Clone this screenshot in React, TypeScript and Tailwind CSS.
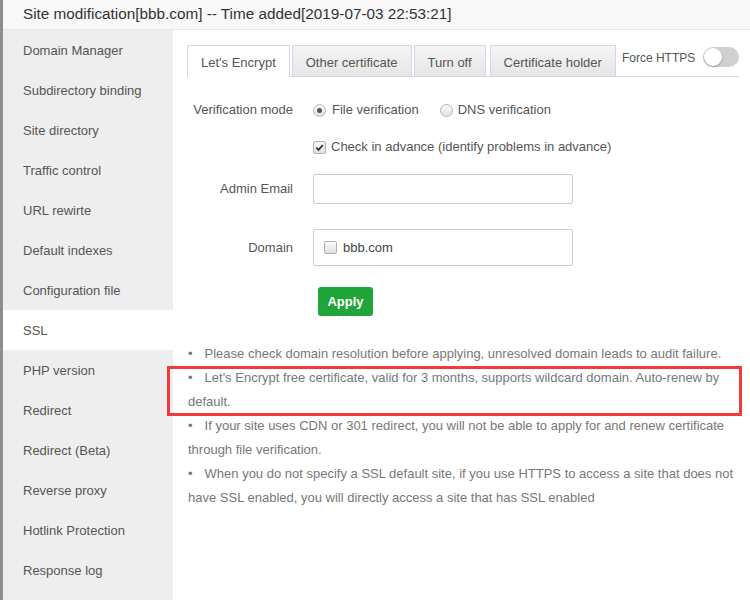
const menu = [
  "Domain Manager",
  "Subdirectory binding",
  "Site directory",
  "Traffic control",
  "URL rewirte",
  "Default indexes",
  "Configuration file",
  "SSL",
  "PHP version",
  "Redirect",
  "Redirect (Beta)",
  "Reverse proxy",
  "Hotlink Protection",
  "Response log",
];

const tabs = ["Let's Encrypt", "Other certificate", "Turn off", "Certificate holder"];

const tips = [
  "Please check domain resolution before applying, unresolved domain leads to audit failure.",
  "Let's Encrypt free certificate, valid for 3 months, supports wildcard domain. Auto-renew by default.",
  "If your site uses CDN or 301 redirect, you will not be able to apply for and renew certificate through file verification.",
  "When you do not specify a SSL default site, if you use HTTPS to access a site that does not have SSL enabled, you will directly access a site that has SSL enabled",
];

function Radio({ checked }: { checked?: boolean }) {
  return (
    <span className="w-[13px] h-[13px] rounded-full border border-[#b5b5b5] bg-gradient-to-b from-[#fafafa] to-[#e2e2e2] flex items-center justify-center">
      {checked && <span className="w-[5px] h-[5px] rounded-full bg-[#555]" />}
    </span>
  );
}

function Check({ checked }: { checked?: boolean }) {
  return (
    <span className="w-[13px] h-[13px] rounded-[2px] border border-[#b0b0b0] bg-gradient-to-b from-[#fafafa] to-[#e0e0e0] flex items-center justify-center">
      {checked && (
        <svg width="9" height="9" viewBox="0 0 10 10">
          <path d="M1.5 5.2 L4 7.6 L8.6 2.2" fill="none" stroke="#333" strokeWidth="2" />
        </svg>
      )}
    </span>
  );
}

function FormRow({ label, children, className }: { label: string; children: React.ReactNode; className: string }) {
  return (
    <div className={"flex " + className}>
      <div className="w-[106px] text-right text-[#555] shrink-0">{label}</div>
      <div className="ml-[20px] flex items-center">{children}</div>
    </div>
  );
}

export default function App() {
  return (
    <div className="relative w-[750px] h-[600px] overflow-hidden flex bg-white text-[13px] font-['Liberation_Sans',Arial,sans-serif]">
      <div className="w-[3px] bg-[#8e8e8e] shrink-0" />
      <div className="flex-1 flex flex-col">
        {/* Header */}
        <div className="h-[30px] bg-[#f8f8f8] border-b border-[#e6e6e6] pl-[20px] text-[15.3px] leading-[28px] text-[#333] whitespace-nowrap">
          Site modification[bbb.com] -- Time added[2019-07-03 22:53:21]
        </div>

        <div className="flex flex-1">
          {/* Sidebar */}
          <div className="w-[170px] bg-[#eeeeee] shrink-0">
            {menu.map((m) => (
              <div
                key={m}
                className={
                  "h-[40px] leading-[42px] pl-[20px] text-[#555] " + (m === "SSL" ? "bg-white" : "")
                }
              >
                {m}
              </div>
            ))}
          </div>

          {/* Main */}
          <div className="flex-1 pl-[14px] pr-[12px] pt-[15px]">
            <div className="flex items-end border-b border-[#d6d4e6] h-[32px] whitespace-nowrap">
              {tabs.map((t, i) => (
                <div
                  key={t}
                  className={
                    "shrink-0 px-[13px] leading-[33px] mr-[2px] border border-b-0 text-[#555] " +
                    (i === 0
                      ? "bg-white border-[#d6d4e6] h-[32px] -mb-px"
                      : "h-[31px] bg-gradient-to-b from-[#f5f5f5] to-[#e6e6e6] border-[#d6d4e6]") +
                    (i === 3 ? " ml-[2px]" : "")
                  }
                >
                  {t}
                </div>
              ))}
              <div className="flex items-start self-start ml-[4px] mt-[4px] text-[12px] text-[#555] shrink-0">
                <span>Force HTTPS</span>
                <span className="ml-[8px] -mt-[2px] w-[36px] h-[20px] rounded-full bg-[#d0d0d0] flex items-center pl-[1px]">
                  <span className="w-[18px] h-[18px] rounded-full bg-white shadow-[0_1px_2px_rgba(0,0,0,0.3)]" />
                </span>
              </div>
            </div>

            <FormRow label="Verification mode" className="mt-[18px] h-[30px] items-center">
              <label className="flex items-center">
                <Radio checked />
                <span className="ml-[6px] text-[#555]">File verification</span>
              </label>
              <label className="flex items-center ml-[21px]">
                <Radio />
                <span className="ml-[5px] text-[#555]">DNS verification</span>
              </label>
            </FormRow>

            <FormRow label="" className="mt-[7px] h-[30px] items-center">
              <Check checked />
              <span className="ml-[5px] text-[#555]">Check in advance (identify problems in advance)</span>
            </FormRow>

            <FormRow label="Admin Email" className="mt-[12px] h-[30px] items-center">
              <div className="w-[260px] h-[30px] border border-[#cccccc] rounded-[2px]" />
            </FormRow>

            <FormRow label="Domain" className="mt-[25px] h-[37px] items-center">
              <div className="w-[260px] h-[37px] border border-[#cccccc] rounded-[2px] flex items-center pl-[10px]">
                <Check />
                <span className="ml-[6px] text-[#444]">bbb.com</span>
              </div>
            </FormRow>

            <div className="mt-[21px] ml-[131px]">
              <button className="h-[29px] w-[55px] rounded-[3px] bg-[#20a53a] text-white font-bold">Apply</button>
            </div>

            <ul className="mt-[26px] text-[#777] leading-[24px] -mr-[4px]">
              {tips.map((t) => (
                <li key={t} className="pl-[1px] before:content-['•'] before:mr-[12px]">
                  {t}
                </li>
              ))}
            </ul>
          </div>
        </div>
      </div>

      {/* annotation */}
      <div className="absolute left-[167px] top-[366px] w-[575px] h-[50px] border-[3px] border-[#f23a3a] pointer-events-none" />
    </div>
  );
}
